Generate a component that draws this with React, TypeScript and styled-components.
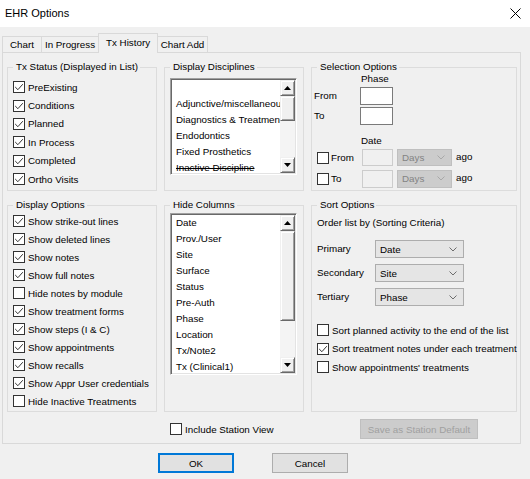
import React from "react";
import styled, { createGlobalStyle } from "styled-components";

const GlobalStyle = createGlobalStyle`
  html, body {
    margin: 0;
    padding: 0;
    background: #f0f0f0;
  }
  body {
    font-family: "Liberation Sans", Arial, sans-serif;
    font-size: 9.8px;
    color: #000;
  }
`;

const txStatus = ["PreExisting", "Conditions", "Planned", "In Process", "Completed", "Ortho Visits"];

const displayOptions: [string, boolean][] = [
  ["Show strike-out lines", true],
  ["Show deleted lines", true],
  ["Show notes", true],
  ["Show full notes", true],
  ["Hide notes by module", false],
  ["Show treatment forms", true],
  ["Show steps (I & C)", true],
  ["Show appointments", true],
  ["Show recalls", true],
  ["Show Appr User credentials", true],
  ["Hide Inactive Treatments", false],
];

const disciplines = [
  { name: "\u00a0" },
  { name: "Adjunctive/miscellaneous" },
  { name: "Diagnostics & Treatment Planning" },
  { name: "Endodontics" },
  { name: "Fixed Prosthetics" },
  { name: "Inactive Discipline", struck: true },
];

const hideColumns = ["Date", "Prov./User", "Site", "Surface", "Status", "Pre-Auth", "Phase", "Location", "Tx/Note2", "Tx (Clinical1)"];

const sortChecks: [string, boolean][] = [
  ["Sort planned activity to the end of the list", false],
  ["Sort treatment notes under each treatment", true],
  ["Show appointments' treatments", false],
];

export default function App() {
  return (
    <>
      <GlobalStyle />
      <Window>
        <TitleBar>
          <span>EHR Options</span>
          <svg width="11" height="11" viewBox="0 0 11 11">
            <path d="M0.5 0.5 L10.5 10.5 M10.5 0.5 L0.5 10.5" stroke="#000" strokeWidth="1" />
          </svg>
        </TitleBar>
        <Body>
          <TabStrip>
            <Tab $w={40}>Chart</Tab>
            <Tab $w={58}>In Progress</Tab>
            <Tab $w={60} $active>Tx History</Tab>
            <Tab $w={51}>Chart Add</Tab>
          </TabStrip>
          <Panel>
            <Group>
              <Legend>Tx Status (Displayed in List)</Legend>
              <CheckList $top={5}>
                {txStatus.map((t) => (
                  <CheckRow key={t} $step={18.4}>
                    <Check checked />
                    {t}
                  </CheckRow>
                ))}
              </CheckList>
            </Group>

            <Group>
              <Legend>Display Disciplines</Legend>
              <ListBox $top={5} $h={97}>
                <Items>
                  {disciplines.map((d, i) => (
                    <Item key={i} $struck={d.struck}>{d.name}</Item>
                  ))}
                </Items>
                <ScrollBar thumb={25} />
              </ListBox>
            </Group>

            <Group>
              <Legend>Selection Options</Legend>
              <SelectionGrid>
                <span />
                <Caption>Phase</Caption>
                <span />
                <span />

                <RowLabel>From</RowLabel>
                <Field $w={33} $h={18} />
                <span />
                <span />

                <RowLabel>To</RowLabel>
                <Field $w={33} $h={18} />
                <span />
                <span />

                <span />
                <Caption $end>Date</Caption>
                <span />
                <span />

                <CheckCell>
                  <Check />
                  From
                </CheckCell>
                <Field $w={31} $h={17} $off disabled />
                <Combo $w={55} $disabled>
                  Days
                  <Chevron color="#a8a8a8" />
                </Combo>
                <Ago>ago</Ago>

                <CheckCell>
                  <Check />
                  To
                </CheckCell>
                <Field $w={31} $h={18} $off disabled />
                <Combo $w={55} $h={18} $disabled>
                  Days
                  <Chevron color="#a8a8a8" />
                </Combo>
                <Ago>ago</Ago>
              </SelectionGrid>
            </Group>

            <Group>
              <Legend>Display Options</Legend>
              <CheckList $top={1}>
                {displayOptions.map(([t, c]) => (
                  <CheckRow key={t} $step={18}>
                    <Check checked={c} />
                    {t}
                  </CheckRow>
                ))}
              </CheckList>
            </Group>

            <Group>
              <Legend>Hide Columns</Legend>
              <ListBox $top={2} $h={162}>
                <Items>
                  {hideColumns.map((c) => (
                    <Item key={c}>{c}</Item>
                  ))}
                </Items>
                <ScrollBar thumb={90} />
              </ListBox>
            </Group>

            <Group>
              <Legend>Sort Options</Legend>
              <SortCaption>Order list by (Sorting Criteria)</SortCaption>
              <SortGrid>
                <RowLabel>Primary</RowLabel>
                <Combo $w={89} $h={18}>
                  Date
                  <Chevron color="#6d6d6d" />
                </Combo>
                <RowLabel>Secondary</RowLabel>
                <Combo $w={89} $h={18}>
                  Site
                  <Chevron color="#6d6d6d" />
                </Combo>
                <RowLabel>Tertiary</RowLabel>
                <Combo $w={89} $h={18}>
                  Phase
                  <Chevron color="#6d6d6d" />
                </Combo>
              </SortGrid>
              <CheckList $top={15}>
                {sortChecks.map(([t, c]) => (
                  <CheckRow key={t} $step={18.5}>
                    <Check checked={c} />
                    {t}
                  </CheckRow>
                ))}
              </CheckList>
            </Group>

            <FooterCell $col={2} $indent={6}>
              <CheckRow $step={20}>
                <Check />
                Include Station View
              </CheckRow>
            </FooterCell>
            <FooterCell $col={3} $indent={49}>
              <Button $disabled>Save as Station Default</Button>
            </FooterCell>
          </Panel>
          <ButtonRow>
            <Button $default>OK</Button>
            <Button>Cancel</Button>
          </ButtonRow>
        </Body>
      </Window>
    </>
  );
}

function Check({ checked }: { checked?: boolean }) {
  return (
    <Box>
      {checked && (
        <svg width="10" height="10" viewBox="0 0 10 10">
          <polyline points="1.2,5 3.9,7.7 8.8,2.2" fill="none" stroke="#333" strokeWidth="1" />
        </svg>
      )}
    </Box>
  );
}

function Chevron({ color }: { color: string }) {
  return (
    <svg width="8" height="5" viewBox="0 0 8 5">
      <polyline points="0.5,0.5 4,4 7.5,0.5" fill="none" stroke={color} strokeWidth="1" />
    </svg>
  );
}

function ScrollBar({ thumb }: { thumb: number }) {
  return (
    <Scroll>
      <ScrollBtn>
        <svg width="7" height="4" viewBox="0 0 7 4">
          <polygon points="0,4 3.5,0 7,4" fill="#000" />
        </svg>
      </ScrollBtn>
      <Thumb $h={thumb} />
      <Track />
      <ScrollBtn>
        <svg width="7" height="4" viewBox="0 0 7 4">
          <polygon points="0,0 7,0 3.5,4" fill="#000" />
        </svg>
      </ScrollBtn>
    </Scroll>
  );
}

const Window = styled.div`
  width: 530px;
  height: 479px;
  background: #f0f0f0;
  display: flex;
  flex-direction: column;
  overflow: hidden;
`;

const TitleBar = styled.div`
  height: 27px;
  box-sizing: border-box;
  background: #fff;
  display: flex;
  align-items: center;
  justify-content: space-between;
  padding: 0 9px 1px 5px;
  font-size: 11px;
`;

const Body = styled.div`
  padding: 6px 0 0 2px;
  display: flex;
  flex-direction: column;
`;

const TabStrip = styled.div`
  display: flex;
  align-items: flex-end;
  height: 19px;
`;

const Tab = styled.div<{ $w: number; $active?: boolean }>`
  width: ${(p) => p.$w}px;
  height: ${(p) => (p.$active ? 20 : 16)}px;
  margin-bottom: ${(p) => (p.$active ? -1 : 0)}px;
  margin-right: -1px;
  box-sizing: border-box;
  border: 1px solid #d9d9d9;
  border-bottom: none;
  background: #f0f0f0;
  position: relative;
  z-index: ${(p) => (p.$active ? 2 : 0)};
  display: flex;
  align-items: center;
  justify-content: center;
  padding-bottom: ${(p) => (p.$active ? 2 : 0)}px;
  white-space: nowrap;
`;

const Panel = styled.div`
  width: 519px;
  height: 392px;
  box-sizing: border-box;
  border: 1px solid #d9d9d9;
  display: grid;
  grid-template-columns: 150px 140px 206px;
  grid-template-rows: 130px 213px 20px;
  column-gap: 7px;
  row-gap: 8px;
  padding: 8px 3px 3px 4px;
  position: relative;
  z-index: 1;
`;

const Group = styled.fieldset`
  margin: 0;
  padding: 0 4px 0 5px;
  border: 1px solid #dcdcdc;
  min-width: 0;
  box-sizing: border-box;
`;

const Legend = styled.legend`
  padding: 0 2px 0 3px;
  font-size: 9.8px;
  line-height: 12px;
`;

const CheckList = styled.div<{ $top: number }>`
  padding-top: ${(p) => p.$top}px;
  display: flex;
  flex-direction: column;
`;

const CheckRow = styled.div<{ $step: number }>`
  height: ${(p) => p.$step}px;
  display: flex;
  align-items: center;
  gap: 3px;
  white-space: nowrap;
`;

const Box = styled.span`
  width: 12px;
  height: 12px;
  box-sizing: border-box;
  border: 1px solid #333;
  background: #fff;
  display: flex;
  align-items: center;
  justify-content: center;
  flex-shrink: 0;
`;

const ListBox = styled.div<{ $top: number; $h: number }>`
  margin-top: ${(p) => p.$top}px;
  width: 127px;
  height: ${(p) => p.$h}px;
  box-sizing: border-box;
  background: #fff;
  border-style: solid;
  border-width: 1px;
  border-color: #a0a0a0 #fff #fff #a0a0a0;
  box-shadow: inset 1px 1px #696969, inset -1px -1px #e3e3e3;
  padding: 1px;
  display: flex;
`;

const Items = styled.div`
  flex: 1;
  min-width: 0;
  overflow: hidden;
`;

const Item = styled.div<{ $struck?: boolean }>`
  height: 16px;
  line-height: 16px;
  padding-left: 4px;
  white-space: nowrap;
  text-decoration: ${(p) => (p.$struck ? "line-through" : "none")};
`;

const Scroll = styled.div`
  width: 15px;
  display: flex;
  flex-direction: column;
  background: #f4f4f4;
`;

const ScrollBtn = styled.div`
  height: 16px;
  box-sizing: border-box;
  background: #f0f0f0;
  border: 1px solid;
  border-color: #f0f0f0 #696969 #696969 #f0f0f0;
  box-shadow: inset 1px 1px #fff, inset -1px -1px #a0a0a0;
  display: flex;
  align-items: center;
  justify-content: center;
  flex-shrink: 0;
`;

const Thumb = styled(ScrollBtn)<{ $h: number }>`
  height: ${(p) => p.$h}px;
`;

const Track = styled.div`
  flex: 1;
`;

const SelectionGrid = styled.div`
  margin-left: -3px;
  display: grid;
  grid-template-columns: 46px 37px 59px auto;
  grid-template-rows: 13px 20px 20px 21px 21px 21px;
  align-items: center;
`;

const Caption = styled.span<{ $end?: boolean }>`
  align-self: ${(p) => (p.$end ? "end" : "start")};
  line-height: 12px;
  padding-left: 1px;
`;

const RowLabel = styled.span`
  line-height: 12px;
`;

const CheckCell = styled.div`
  display: flex;
  align-items: center;
  gap: 2px;
  padding-left: 3px;
`;

const Field = styled.input<{ $w: number; $h: number; $off?: boolean }>`
  width: ${(p) => p.$w}px;
  height: ${(p) => p.$h}px;
  margin: 0 0 0 ${(p) => (p.$off ? 2 : 0)}px;
  padding: 0;
  box-sizing: border-box;
  background: ${(p) => (p.$off ? "#f0f0f0" : "#fff")};
  border: 1px solid ${(p) => (p.$off ? "#cccccc" : "#7a7a7a")};
  outline: none;
`;

const Combo = styled.div<{ $w: number; $h?: number; $disabled?: boolean }>`
  width: ${(p) => p.$w}px;
  height: ${(p) => p.$h ?? 17}px;
  box-sizing: border-box;
  background: ${(p) => (p.$disabled ? "#cccccc" : "#e5e5e5")};
  border: 1px solid ${(p) => (p.$disabled ? "#bfbfbf" : "#adadad")};
  color: ${(p) => (p.$disabled ? "#838383" : "#000")};
  display: flex;
  align-items: center;
  justify-content: space-between;
  padding: 0 6px 0 4px;
`;

const Ago = styled.span`
  margin-top: -3px;
`;

const SortCaption = styled.div`
  padding-top: 6px;
  line-height: 12px;
`;

const SortGrid = styled.div`
  margin-top: 11px;
  display: grid;
  grid-template-columns: 58px 89px;
  row-gap: 6px;
  align-items: center;
`;

const FooterCell = styled.div<{ $col: number; $indent: number }>`
  grid-column: ${(p) => p.$col};
  grid-row: 3;
  margin-top: -2px;
  padding-left: ${(p) => p.$indent}px;
  display: flex;
  align-items: center;
`;

const Button = styled.div<{ $disabled?: boolean; $default?: boolean }>`
  width: ${(p) => (p.$disabled ? 118 : 76)}px;
  height: 20px;
  box-sizing: border-box;
  display: flex;
  align-items: center;
  justify-content: center;
  background: ${(p) => (p.$disabled ? "#cccccc" : "#e1e1e1")};
  border: 1px solid ${(p) => (p.$disabled ? "#bfbfbf" : p.$default ? "#0078d7" : "#adadad")};
  box-shadow: ${(p) => (p.$default ? "inset 0 0 0 1px #0078d7" : "none")};
  color: ${(p) => (p.$disabled ? "#a0a0a0" : "#000")};
  white-space: nowrap;
`;

const ButtonRow = styled.div`
  display: flex;
  gap: 38px;
  margin-top: 9px;
  padding-left: 156px;
`;
